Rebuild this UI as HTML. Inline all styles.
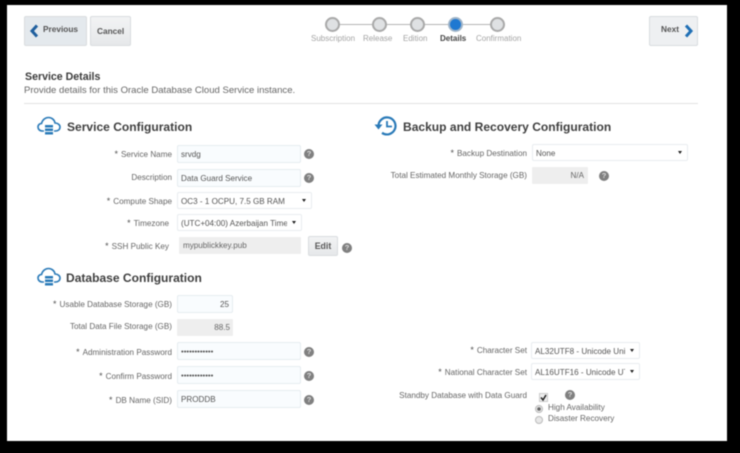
<!DOCTYPE html>
<html><head><meta charset="utf-8"><style>
html,body{margin:0;padding:0;background:#000;width:740px;height:453px;overflow:hidden}
#p{position:absolute;left:0;top:0;width:740px;height:453px;background:#000;filter:blur(.4px);font-family:"Liberation Sans",sans-serif;color:#666;font-size:9px}
#w{position:absolute;left:7px;top:5px;width:720px;height:436px;background:#fff}
.a{position:absolute;white-space:nowrap}
.l{position:absolute;white-space:nowrap;text-align:right;height:12px;line-height:12px;font-size:8.15px;color:#666}
.l i{font-style:normal;font-size:9px;margin-right:3px;color:#555}
.f{position:absolute;box-sizing:border-box;background:#f9fcfe;border:1px solid #e6ecf0;border-radius:2px;line-height:17px;padding-left:3px;color:#555;font-size:8.1px;white-space:nowrap;overflow:hidden}
.g{position:absolute;box-sizing:border-box;background:#eeeeee;border-radius:1px;line-height:18px;color:#666;font-size:8.1px;white-space:nowrap}
.s{position:absolute;box-sizing:border-box;background:#fff;border:1px solid #e8ecef;border-radius:2px;line-height:17px;padding-left:3px;color:#555;font-size:8.1px;white-space:nowrap;overflow:hidden}
.s b{position:absolute;right:0;top:0;width:14px;height:15px;background:#fff}
.s b:after{content:"";position:absolute;left:5px;top:6px;border-left:2.5px solid transparent;border-right:2.5px solid transparent;border-top:3.5px solid #222}
.h{position:absolute;width:10px;height:10px;border-radius:50%;background:#808080;color:#ddd;font-size:7.5px;font-weight:bold;line-height:10px;text-align:center}
.b{position:absolute;box-sizing:border-box;background:linear-gradient(#f2f3f4,#e6e8ea);border:1px solid #d9dcdf;border-radius:2px;color:#555;font-weight:bold;font-size:8.3px}
.t{position:absolute;font-weight:bold;font-size:12.05px;color:#3f3f3f;white-space:nowrap;line-height:16px;height:16px}
.c{position:absolute;box-sizing:border-box;width:15px;height:15px;border-radius:50%;background:#dfe1e3;border:2px solid #a9a9a9;top:17px}
.x{position:absolute;height:1px;background:#b4b4b4;top:24px}
.k{position:absolute;top:33px;height:11px;line-height:11px;font-size:8px;color:#a4a4a4;white-space:nowrap}
svg{position:absolute}
</style></head><body><div id="p"><div id="w"></div>

<div class="b" style="left:24px;top:16px;width:63px;height:30px;background:#e4e9ed;">
<svg style="left:4px;top:7px" width="11" height="14" viewBox="0 0 11 14"><path d="M8 1.500 L3 7 L8 12.500" fill="none" stroke="#1f5f9e" stroke-width="3"/></svg>
<span class="a" style="left:18px;top:7px">Previous</span></div>
<div class="b" style="left:90px;top:16px;width:41px;height:30px"><span class="a" style="left:6px;top:9px">Cancel</span></div>
<div class="b" style="left:649px;top:16px;width:49px;height:30px;background:#eef0f2"><span class="a" style="left:11px;top:7px">Next</span>
<svg style="left:33px;top:7px" width="11" height="14" viewBox="0 0 11 14"><path d="M3 1.500 L8 7 L3 12.500" fill="none" stroke="#1f6fb5" stroke-width="3"/></svg></div>

<div class="x" style="left:333px;width:165px"></div>
<div class="c" style="left:325px"></div>
<div class="c" style="left:372px"></div>
<div class="c" style="left:410px"></div>
<div class="c" style="left:448px;background:#1f78d1;border-color:#9fb4c8"></div>
<div class="c" style="left:490px"></div>
<div class="k" style="left:311px">Subscription</div>
<div class="k" style="left:363px">Release</div>
<div class="k" style="left:403px">Edition</div>
<div class="k" style="left:440px;color:#444;font-weight:bold">Details</div>
<div class="k" style="left:476px">Confirmation</div>

<div class="a" style="left:25px;top:71px;font-size:10.6px;font-weight:bold;color:#3a3a3a;line-height:13px">Service Details</div>
<div class="a" style="left:24px;top:84px;font-size:9.55px;color:#666;line-height:13px">Provide details for this Oracle Database Cloud Service instance.</div>
<div class="a" style="left:24px;top:103px;width:674px;height:1px;background:#e2e2e2"></div>

<svg style="left:37px;top:116px" width="24" height="20" viewBox="0 0 24 20"><path d="M7 15 H5.500 C2.500 15 1 13 1 11 C1 9 2.500 7.500 4.500 7.500 C5.500 3.500 8.500 1.500 11.500 1.500 C15 1.500 17.500 4 18 7 C21 7 23 9 23 11 C23 13.500 21 15 18.500 15 H17" fill="none" stroke="#2a7ab8" stroke-width="1.600"/><path d="M8 9h8v2.500h-8zM8 12.500h8v2.500h-8zM8 16h8v2.500h-8z" fill="#2a7ab8"/></svg>
<div class="t" style="left:67px;top:119px">Service Configuration</div>
<svg style="left:374px;top:115px" width="24" height="22" viewBox="0 0 24 22"><path d="M4.500 11 A8.500 8.500 0 1 1 8 17.800" fill="none" stroke="#2a7ab8" stroke-width="2.200"/><path d="M0.500 9.500 H8.500 L4.500 14.500 Z" fill="#2a7ab8"/><path d="M13 6 V11.500 H18" fill="none" stroke="#2a7ab8" stroke-width="1.800"/></svg>
<div class="t" style="left:403px;top:119px">Backup and Recovery Configuration</div>

<div class="l" style="right:568px;top:148px"><i>*</i>Service Name</div>
<div class="f" style="left:177px;top:145px;width:124px;height:18px">srvdg</div><div class="h" style="left:304px;top:149px">?</div>
<div class="l" style="right:568px;top:172px">Description</div>
<div class="f" style="left:177px;top:169px;width:124px;height:18px">Data Guard Service</div><div class="h" style="left:304px;top:173px">?</div>
<div class="l" style="right:568px;top:195px"><i>*</i>Compute Shape</div>
<div class="s" style="left:177px;top:192px;width:135px;height:17px">OC3 - 1 OCPU, 7.5 GB RAM<b></b></div>
<div class="l" style="right:571px;top:217px"><i>*</i>Timezone</div>
<div class="s" style="left:177px;top:214px;width:125px;height:17px">(UTC+04:00) Azerbaijan Time<b></b></div>
<div class="l" style="right:571px;top:240px"><i>*</i>SSH Public Key</div>
<div class="g" style="left:179px;top:237px;width:122px;height:17px;padding-left:4px">mypublickkey.pub</div>
<div class="b" style="left:308px;top:236px;width:30px;height:20px;line-height:18px;text-align:center;font-size:8.8px;color:#5a5a5a">Edit</div><div class="h" style="left:342px;top:243px">?</div>

<svg style="left:37px;top:267px" width="24" height="20" viewBox="0 0 24 20"><path d="M7 15 H5.500 C2.500 15 1 13 1 11 C1 9 2.500 7.500 4.500 7.500 C5.500 3.500 8.500 1.500 11.500 1.500 C15 1.500 17.500 4 18 7 C21 7 23 9 23 11 C23 13.500 21 15 18.500 15 H17" fill="none" stroke="#2a7ab8" stroke-width="1.600"/><path d="M8 9h8v2.500h-8zM8 12.500h8v2.500h-8zM8 16h8v2.500h-8z" fill="#2a7ab8"/></svg>
<div class="t" style="left:66px;top:270px">Database Configuration</div>

<div class="l" style="right:568px;top:298px"><i>*</i>Usable Database Storage (GB)</div>
<div class="f" style="left:177px;top:295px;width:56px;height:18px;text-align:right;padding-right:3px">25</div>
<div class="l" style="right:568px;top:321px">Total Data File Storage (GB)</div>
<div class="g" style="left:177px;top:319px;width:56px;height:17px;text-align:right;padding-right:3px">88.5</div>
<div class="l" style="right:568px;top:346px"><i>*</i>Administration Password</div>
<div class="f" style="left:177px;top:342px;width:124px;height:18px;font-size:7.7px;line-height:18px">••••••••••••</div><div class="h" style="left:304px;top:347px">?</div>
<div class="l" style="right:568px;top:370px"><i>*</i>Confirm Password</div>
<div class="f" style="left:177px;top:366px;width:124px;height:18px;font-size:7.7px;line-height:18px">••••••••••••</div><div class="h" style="left:304px;top:371px">?</div>
<div class="l" style="right:568px;top:394px"><i>*</i>DB Name (SID)</div>
<div class="f" style="left:177px;top:390px;width:124px;height:18px">PRODDB</div><div class="h" style="left:304px;top:395px">?</div>

<div class="l" style="right:213px;top:147px"><i>*</i>Backup Destination</div>
<div class="s" style="left:532px;top:144px;width:156px;height:17px">None<b></b></div>
<div class="l" style="right:213px;top:170px">Total Estimated Monthly Storage (GB)</div>
<div class="g" style="left:532px;top:167px;width:56px;height:17px;text-align:right;padding-right:4px">N/A</div><div class="h" style="left:599px;top:171px">?</div>

<div class="l" style="right:213px;top:344px"><i>*</i>Character Set</div>
<div class="s" style="left:531px;top:342px;width:109px;height:17px">AL32UTF8 - Unicode Uni<b></b></div>
<div class="l" style="right:213px;top:366px"><i>*</i>National Character Set</div>
<div class="s" style="left:531px;top:363px;width:109px;height:17px">AL16UTF16 - Unicode UTF<b></b></div>
<div class="l" style="right:213px;top:390px">Standby Database with Data Guard</div>
<svg style="left:539px;top:393px" width="9" height="9" viewBox="0 0 9 9"><rect x=".5" y=".5" width="8" height="8" fill="#eee" stroke="#ccc"/><path d="M2 4.500 L4 7 L7 2" fill="none" stroke="#222" stroke-width="1.500"/></svg>
<div class="h" style="left:565px;top:390px">?</div>
<svg style="left:535px;top:405px" width="8" height="8"><circle cx="4" cy="4" r="3.500" fill="#e8e8e8" stroke="#bbb"/><circle cx="4" cy="4" r="1.800" fill="#666"/></svg>
<div class="l" style="left:548px;top:402px">High Availability</div>
<svg style="left:535px;top:416px" width="8" height="8"><circle cx="4" cy="4" r="3.500" fill="#e8e8e8" stroke="#bbb"/></svg>
<div class="l" style="left:548px;top:413px">Disaster Recovery</div>
</div></body></html>
